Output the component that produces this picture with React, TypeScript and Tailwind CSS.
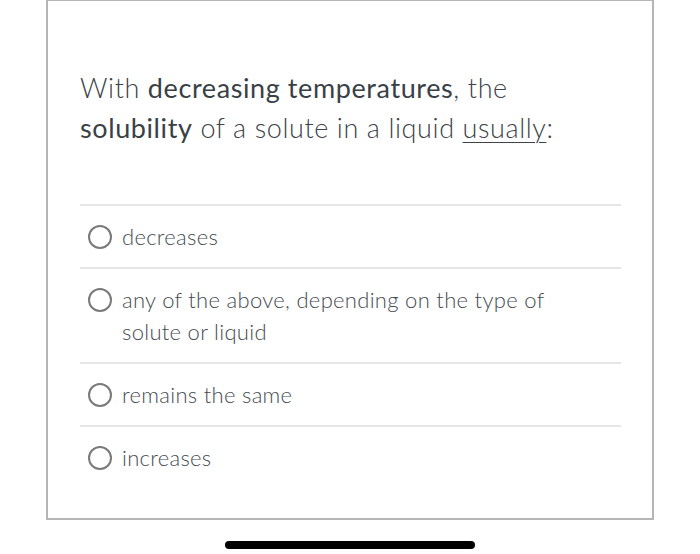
const options = [
  ['decreases'],
  ['any of the above, depending on the type of', 'solute or liquid'],
  ['remains the same'],
  ['increases'],
];

function Radio() {
  return (
    <span className="mt-[4px] h-[24px] w-[24px] shrink-0 rounded-full border-2 border-[#7a7a7a] bg-white" />
  );
}

export default function App() {
  return (
    <div className="relative h-[554px] w-[700px] overflow-hidden bg-white font-['Lato',sans-serif]">
      <div className="ml-[46px] flex h-[520px] w-[608px] flex-col border-2 border-t border-[#b5b5b5] pl-[32px] pr-[31px] pt-[67px]">
        {/* Question */}
        <p className="text-[27px] font-light leading-[40px] tracking-[0.6px] text-[#3d4348]">
          With <span className="font-normal text-[#3a4146]">decreasing temperatures</span>, the
          <br />
          <span className="font-normal text-[#3a4146]">solubility</span> of a solute in a liquid{' '}
          <span className="underline decoration-1 underline-offset-[4px]">usually</span>:
        </p>

        {/* Answers */}
        <div className="mt-[56px] border-t-2 border-[#e6e6e6]">
          {options.map((lines, i) => (
            <div
              key={i}
              className={`flex items-start gap-[10px] pl-[8px] pt-[15px] pb-[14px] ${
                i < options.length - 1 ? 'border-b-2 border-[#e6e6e6]' : ''
              }`}
            >
              <Radio />
              <div className="text-[22px] font-light leading-[32px] tracking-[0.3px] text-[#474c51]">
                {lines.map((l, j) => (
                  <div key={j}>{l}</div>
                ))}
              </div>
            </div>
          ))}
        </div>
      </div>

      {/* home indicator */}
      <div className="absolute left-[225px] top-[541px] h-[8px] w-[250px] rounded-full bg-black" />
    </div>
  );
}
